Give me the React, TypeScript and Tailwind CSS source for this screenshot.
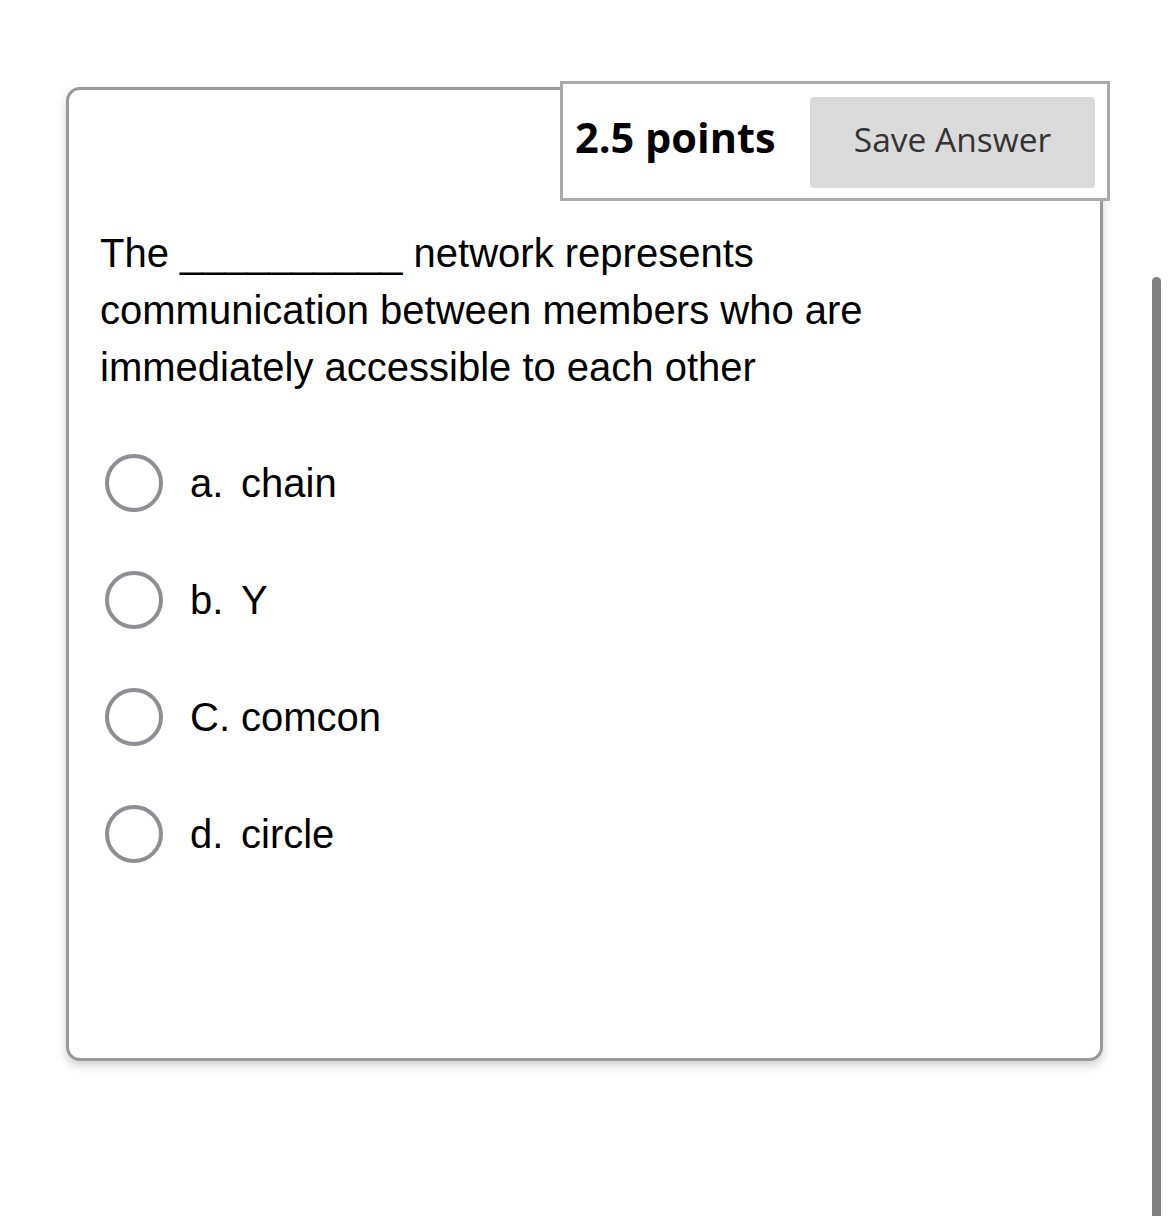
const OPTIONS = [
  { key: "a.", label: "chain" },
  { key: "b.", label: "Y" },
  { key: "C.", label: "comcon" },
  { key: "d.", label: "circle" },
];

function Radio() {
  return (
    <span className="block w-[58px] h-[58px] shrink-0 rounded-full border-[4px] border-[#8e8e93] bg-white" />
  );
}

export default function App() {
  return (
    <div className="relative h-[1216px] w-full overflow-hidden bg-white">
      {/* Scrollbar */}
      <div className="absolute right-[9px] top-[277px] h-[960px] w-[9px] rounded-full bg-[#808080]" />

      <div className="relative ml-[66px] mt-[87px] h-[974px] w-[1037px] rounded-[14px] border-[3px] border-[#999999] bg-white shadow-[0_5px_10px_rgba(0,0,0,0.18)]">
        {/* Points header */}
        <div className="absolute left-[491px] top-[-9px] flex h-[120px] w-[550px] items-center border-[3px] border-[#aaaaaa] bg-white p-3 pb-[10px]">
          <span className="mb-[8px] font-['Open_Sans','Noto_Sans',sans-serif] text-[41.5px] font-bold leading-none text-black">
            2.5 points
          </span>
          <button className="ml-auto flex h-[91px] w-[285px] items-center justify-center rounded-[4px] bg-[#dadada] pb-[6px] font-['Open_Sans','Noto_Sans',sans-serif] text-[33.5px] text-[#333333]">
            Save Answer
          </button>
        </div>

        {/* Question */}
        <div className="px-[31px] pt-[135px] font-['Liberation_Sans',Arial,sans-serif] text-black">
          <p className="w-[820px] text-[40px] leading-[57px]">
            The __________ network represents communication between members who are immediately
            accessible to each other
          </p>

          <div className="mt-[58px] flex flex-col gap-[59px] pl-[5px]">
            {OPTIONS.map((o) => (
              <label key={o.key} className="flex items-center gap-[27px]">
                <Radio />
                <span className="flex text-[40px] leading-[58px]">
                  <span className="w-[51px]">{o.key}</span>
                  <span>{o.label}</span>
                </span>
              </label>
            ))}
          </div>
        </div>
      </div>
    </div>
  );
}
